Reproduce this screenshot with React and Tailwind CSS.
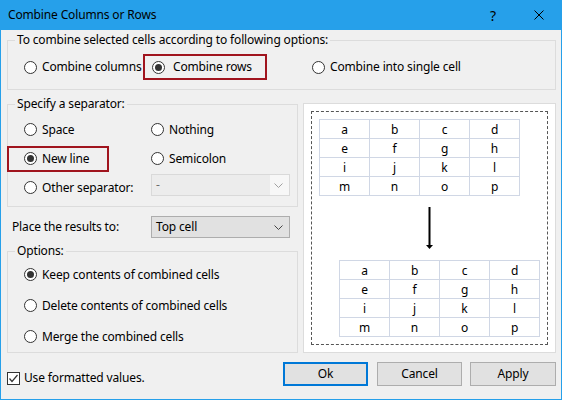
import React from "react";

const grid = [
  ["a", "b", "c", "d"],
  ["e", "f", "g", "h"],
  ["i", "j", "k", "l"],
  ["m", "n", "o", "p"],
];

function Radio({ checked }) {
  return (
    <span className="flex h-[13px] w-[13px] shrink-0 items-center justify-center rounded-full border border-[#333333] bg-white">
      {checked && <span className="h-[7px] w-[7px] rounded-full bg-[#333333]" />}
    </span>
  );
}

function Option({ label, checked, gap = "gap-[5px]" }) {
  return (
    <span className={`flex items-center ${gap} whitespace-nowrap`}>
      <Radio checked={checked} />
      <span>{label}</span>
    </span>
  );
}

function Chevron({ color }) {
  return (
    <svg width="9" height="5" viewBox="0 0 9 5" className="shrink-0">
      <polyline points="0.5,0.5 4.5,4.5 8.5,0.5" fill="none" stroke={color} strokeWidth="1" />
    </svg>
  );
}

function Group({ title, className = "", children }) {
  return (
    <fieldset className={`border border-[#dcdcdc] ${className}`}>
      <legend className="ml-[7px] px-[2px] leading-[16px]">{title}</legend>
      {children}
    </fieldset>
  );
}

function Cells() {
  return (
    <table className="border-collapse">
      <tbody>
        {grid.map((row, r) => (
          <tr key={r}>
            {row.map((c) => (
              <td
                key={c}
                className="h-[19px] w-[50px] border border-[#d0d7e5] p-0 text-center leading-[17px]"
              >
                {c}
              </td>
            ))}
          </tr>
        ))}
      </tbody>
    </table>
  );
}

function Button({ label, primary, className = "" }) {
  return (
    <button
      className={`h-[24px] bg-[#e1e1e1] ${
        primary ? "border-2 border-[#0078d7]" : "border border-[#adadad]"
      } ${className}`}
    >
      {label}
    </button>
  );
}

export default function App() {
  return (
    <div className="flex h-[400px] w-[562px] flex-col border-x border-b border-[#26a0ea] bg-[#f0f0f0] font-['Noto_Sans',sans-serif] text-[12px] tracking-[-0.15px] text-black">
      {/* Title bar */}
      <div className="flex h-[30px] shrink-0 items-center bg-[#26a0ea] pl-[7px]">
        <span>Combine Columns or Rows</span>
        <span className="ml-auto text-[14px]">?</span>
        <svg width="10" height="10" viewBox="0 0 10 10" className="ml-[38px] mr-[17px]">
          <path d="M0.5 0.5 L9.5 9.5 M9.5 0.5 L0.5 9.5" stroke="#000" strokeWidth="1" />
        </svg>
      </div>

      <div className="flex flex-col pl-[6px] pr-[5px]">
        {/* Mode */}
        <Group title="To combine selected cells according to following options:" className="mt-[2px] pb-[9px]">
          <div className="mt-[6px] flex h-[26px] items-center pl-[16px]">
            <span className="w-[119px]">
              <Option label="Combine columns" />
            </span>
            <span className="flex h-[26px] w-[124px] items-center border-2 border-[#a0141e] pl-[7px]">
              <Option label="Combine rows" checked gap="gap-[8px]" />
            </span>
            <span className="ml-[45px]">
              <Option label="Combine into single cell" />
            </span>
          </div>
        </Group>

        <div className="mt-[6px] flex gap-[5px]">
          {/* Left column */}
          <div className="flex w-[291px] flex-col">
            <Group title="Specify a separator:" className="pb-[4px] pt-[3px]">
              <div className="flex h-[29px] items-center">
                <span className="w-[143px] pl-[16px]">
                  <Option label="Space" />
                </span>
                <Option label="Nothing" />
              </div>
              <div className="flex h-[29px] items-center">
                <span className="w-[143px]">
                  <span className="-ml-px flex h-[26px] w-[102px] items-center border-2 border-[#a0141e] pl-[15px]">
                    <Option label="New line" checked />
                  </span>
                </span>
                <Option label="Semicolon" />
              </div>
              <div className="flex h-[29px] items-center">
                <span className="w-[143px] pl-[16px]">
                  <Option label="Other separator:" />
                </span>
                <div className="mt-[-5px] flex h-[22px] w-[139px] items-center border border-[#d9d9d9] bg-[#f7f7f7]">
                  <span className="flex h-full w-[118px] items-center bg-[#ececec] pl-[4px] text-[#6d6d6d]">-</span>
                  <span className="ml-auto mr-[6px]">
                    <Chevron color="#a0a0a0" />
                  </span>
                </div>
              </div>
            </Group>

            <div className="mt-[9px] flex h-[22px] items-center">
              <span className="w-[144px] pl-[5px]">Place the results to:</span>
              <div className="flex h-[22px] w-[139px] items-center border border-[#adadad] bg-[#e1e1e1] pl-[4px]">
                <span>Top cell</span>
                <span className="ml-auto mr-[6px]">
                  <Chevron color="#444444" />
                </span>
              </div>
            </div>

            <Group title="Options:" className="mt-[5px]">
              <div className="flex h-[31px] items-center pl-[16px]">
                <Option label="Keep contents of combined cells" checked />
              </div>
              <div className="flex h-[31px] items-center pl-[16px]">
                <Option label="Delete contents of combined cells" />
              </div>
              <div className="flex h-[31px] items-center pl-[16px]">
                <Option label="Merge the combined cells" />
              </div>
            </Group>
          </div>

          {/* Preview */}
          <div className="mt-[7px] flex h-[250px] w-[253px] border border-[#dcdcdc] bg-white p-[7px]">
            <div className="flex flex-1 flex-col justify-between border border-dashed border-[#555555] p-[7px]">
              <div className="self-start">
                <Cells />
              </div>
              <svg width="9" height="42" viewBox="0 0 9 42" className="self-center">
                <rect x="3.5" y="0" width="2" height="39" fill="#000" />
                <polygon points="1,38 8,38 4.5,42" fill="#000" />
              </svg>
              <div className="self-end">
                <Cells />
              </div>
            </div>
          </div>
        </div>

        {/* Footer */}
        <div className="mt-[9px] flex items-start">
          <label className="mt-[7px] flex items-center gap-[4px]">
            <span className="flex h-[13px] w-[13px] items-center justify-center border border-[#333333] bg-white">
              <svg width="11" height="11" viewBox="0 0 11 11">
                <polyline points="1.5,5.5 4,8.5 9.5,2" fill="none" stroke="#333" strokeWidth="1.2" />
              </svg>
            </span>
            <span>Use formatted values.</span>
          </label>
          <Button label="Ok" primary className="ml-auto w-[85px]" />
          <Button label="Cancel" className="ml-[9px] w-[85px]" />
          <Button label="Apply" className="ml-[8px] w-[86px]" />
        </div>
      </div>
    </div>
  );
}
